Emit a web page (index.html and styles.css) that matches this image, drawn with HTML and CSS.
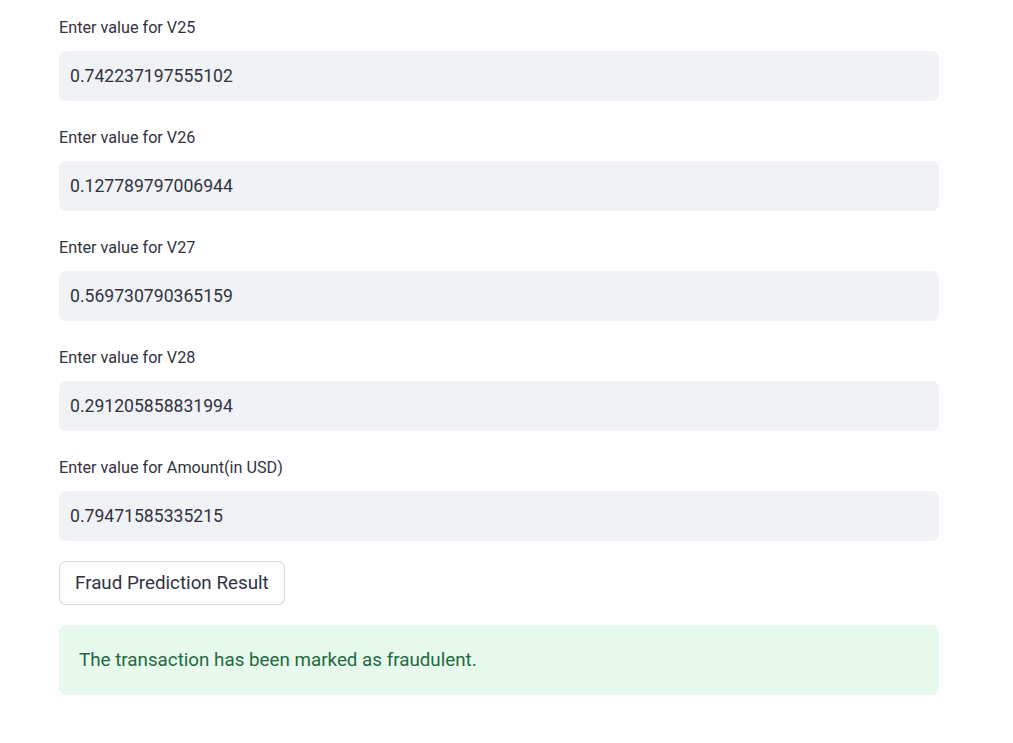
FILE: index.html
```html
<!DOCTYPE html>
<html lang="en">
<head>
<meta charset="utf-8">
<title>Fraud Detection</title>
<link rel="stylesheet" href="styles.css">
</head>
<body>
<main class="page">
  <div class="field">
    <label class="label">Enter value for V25</label>
    <div class="input">0.742237197555102</div>
  </div>
  <div class="field">
    <label class="label">Enter value for V26</label>
    <div class="input">0.127789797006944</div>
  </div>
  <div class="field">
    <label class="label">Enter value for V27</label>
    <div class="input">0.569730790365159</div>
  </div>
  <div class="field">
    <label class="label">Enter value for V28</label>
    <div class="input">0.291205858831994</div>
  </div>
  <div class="field">
    <label class="label">Enter value for Amount(in USD)</label>
    <div class="input">0.79471585335215</div>
  </div>
  <button class="button">Fraud Prediction Result</button>
  <div class="alert">The transaction has been marked as fraudulent.</div>
</main>
</body>
</html>
```
FILE: styles.css
```css
html, body {
  margin: 0;
  padding: 0;
  background: #ffffff;
}
body {
  font-family: Roboto, "Liberation Sans", sans-serif;
  color: #31333f;
}
.page {
  width: 880px;
  margin-left: 59px;
  padding-top: 14px;
  display: flex;
  flex-direction: column;
  align-items: flex-start;
}
.field {
  width: 100%;
  display: flex;
  flex-direction: column;
  margin-bottom: 23px;
}
.label {
  font-size: 16.2px;
  line-height: 24px;
  height: 24px;
  padding-top: 2px;
  margin-bottom: 11px;
}
.input {
  height: 50px;
  box-sizing: border-box;
  background: #f0f2f6;
  border-radius: 7px;
  padding: 0 11px;
  font-size: 17.6px;
  line-height: 50px;
}
.button {
  margin-top: -3px;
  height: 44px;
  box-sizing: border-box;
  padding: 0 15px;
  background: #ffffff;
  border: 1px solid rgba(49, 51, 63, 0.2);
  border-radius: 7px;
  font-family: inherit;
  font-size: 18.8px;
  color: #31333f;
}
.alert {
  margin-top: 20px;
  width: 100%;
  box-sizing: border-box;
  height: 70px;
  padding: 0 20px;
  background: #e8f9ee;
  color: #23693d;
  border-radius: 7px;
  font-size: 18.8px;
  line-height: 71px;
}
```
